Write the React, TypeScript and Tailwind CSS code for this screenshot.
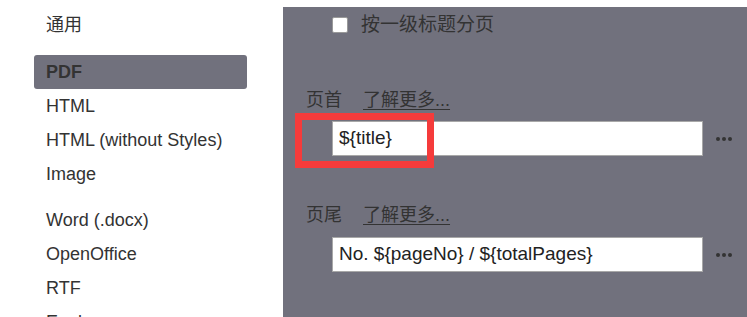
import React from 'react'

const font = { fontFamily: '"Liberation Sans", "Noto Sans CJK SC", Arial, sans-serif' }

const groups = [
  ['PDF', 'HTML', 'HTML (without Styles)', 'Image'],
  ['Word (.docx)', 'OpenOffice', 'RTF', 'Epub'],
]

function Dots() {
  return (
    <div className="ml-[13px] flex items-center gap-[2px]">
      <span className="h-[4px] w-[4px] rounded-full bg-[#333]" />
      <span className="h-[4px] w-[4px] rounded-full bg-[#333]" />
      <span className="h-[4px] w-[4px] rounded-full bg-[#333]" />
    </div>
  )
}

function Field({ label, value, top, gap }: { label: string; value: string; top: string; gap: string }) {
  return (
    <>
      <div className={`flex h-[24px] items-center text-[18px] text-[#333] ${top}`}>
        <span>{label}</span>
        <span className="ml-[21px] underline underline-offset-[3px]">了解更多...</span>
      </div>
      <div className={`flex items-center pl-[26px] ${gap}`}>
        <div className="flex h-[35px] w-[371px] items-center border border-[#a8a8a8] bg-white pl-[6px] text-[19px] text-[#222]">
          {value}
        </div>
        <Dots />
      </div>
    </>
  )
}

export default function App() {
  return (
    <div className="relative flex h-[317px] w-[747px] overflow-hidden bg-white" style={font}>
      {/* sidebar */}
      <div className="w-[283px] shrink-0 pl-[34px] pt-[8px]">
        <div className="flex h-[34px] w-[213px] items-center pl-3 text-[18px] text-[#333]">通用</div>
        {groups.map((g, gi) => (
          <div key={gi} className={gi === 0 ? 'mt-[13px]' : 'mt-[12px]'}>
            {g.map((item, i) => (
              <div
                key={item}
                className={`flex h-[34px] w-[213px] items-center pl-3 text-[18px] ${
                  gi === 0 && i === 0
                    ? 'rounded-[3px] bg-[#71717d] font-bold text-[#333]'
                    : 'text-[#333]'
                }`}
              >
                {item}
              </div>
            ))}
          </div>
        ))}
      </div>

      {/* settings panel */}
      <div className="mt-[7px] flex flex-1 flex-col bg-[#71717d] pl-[23px]">
        <div className="flex h-[36px] items-center pl-[26px]">
          <span className="h-[16px] w-[16px] rounded-[2px] border border-[#999] bg-white" />
          <span className="ml-[13px] text-[19px] text-[#333]">按一级标题分页</span>
        </div>
        <Field label="页首" value="${title}" top="mt-[45px]" gap="mt-[9px]" />
        <Field label="页尾" value="No. ${pageNo} / ${totalPages}" top="mt-[47px]" gap="mt-[10px]" />
      </div>

      {/* highlight */}
      <div className="absolute left-[295px] top-[113px] h-[55px] w-[139px] border-[7px] border-[#f53b3b]" />
    </div>
  )
}
